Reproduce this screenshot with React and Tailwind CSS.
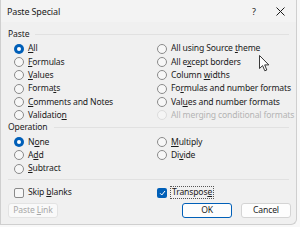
import React from 'react';

// underline one accelerator letter
const Label = ({ text, u }) => {
  const i = u === undefined ? -1 : u;
  if (i < 0) return <span>{text}</span>;
  return (
    <span className="whitespace-nowrap">
      {text.slice(0, i)}
      <span className="underline underline-offset-[1px]">{text[i]}</span>
      {text.slice(i + 1)}
    </span>
  );
};

const Radio = ({ text, u, checked, disabled }) => (
  <div className={`h-[13.3px] flex items-center gap-[4px] whitespace-nowrap ${disabled ? 'text-[#b4b4b4]' : 'text-[#1b1b1b]'}`}>
    {checked ? (
      <div className="w-[10px] h-[10px] shrink-0 rounded-full bg-[#005fb8] flex items-center justify-center">
        <div className="w-[4px] h-[4px] rounded-full bg-white" />
      </div>
    ) : (
      <div
        className={`w-[10px] h-[10px] shrink-0 rounded-full border ${
          disabled ? 'border-[#dcdcdc] bg-[#f5f5f5]' : 'border-[#8a8a8a] bg-[#f7f7f7]'
        }`}
      />
    )}
    <Label text={text} u={u} />
  </div>
);

const Section = ({ title }) => (
  <div className="h-[12px] flex items-center gap-[6px] text-[#1b1b1b]">
    <span>{title}</span>
    <div className="flex-1 h-px bg-[#e1e1e1]" />
  </div>
);

export default function App() {
  const leftPaste = [
    { text: 'All', u: 0, checked: true },
    { text: 'Formulas', u: 0 },
    { text: 'Values', u: 0 },
    { text: 'Formats', u: 5 },
    { text: 'Comments and Notes', u: 0 },
    { text: 'Validation', u: 9 },
  ];
  const rightPaste = [
    { text: 'All using Source theme', u: 17 },
    { text: 'All except borders', u: 5 },
    { text: 'Column widths', u: 7 },
    { text: 'Formulas and number formats', u: 2 },
    { text: 'Values and number formats', u: 3 },
    { text: 'All merging conditional formats', u: 7, disabled: true },
  ];

  return (
    <div
      className="w-[300px] h-[227px] bg-[#f8f8f8] overflow-hidden text-[8.6px] leading-none tracking-[-0.15px]"
      style={{ fontFamily: '"Noto Sans", "Open Sans", sans-serif' }}
    >
      <div className="relative w-[297px] h-[225px] border-l border-r border-b border-[#cfcfcf] rounded-br-[6px] bg-[#f0f0f0] flex flex-col">
        {/* title bar */}
        <div className="h-[22px] bg-[#f3f3f3] flex items-center pl-[6px] pr-[10px] text-[#1b1b1b]">
          <span className="flex-1 text-[9px]">Paste Special</span>
          <span className="w-[10px] text-center mr-[17px] text-[9px]">?</span>
          <svg width="9" height="9" viewBox="0 0 9 9" className="mr-[1px]">
            <path d="M0.5 0.5 L8.5 8.5 M8.5 0.5 L0.5 8.5" stroke="#1b1b1b" strokeWidth="1" />
          </svg>
        </div>

        <div className="flex-1 px-[7px] pt-[6px]">
          <Section title="Paste" />
          <div className="grid grid-cols-[143px_1fr] pl-[6px] pt-[2px]">
            <div>
              {leftPaste.map((r) => (
                <Radio key={r.text} {...r} />
              ))}
            </div>
            <div>
              {rightPaste.map((r) => (
                <Radio key={r.text} {...r} />
              ))}
            </div>
          </div>

          <Section title="Operation" />
          <div className="grid grid-cols-[143px_1fr] pl-[6px] pt-[1.5px]">
            <div>
              <Radio text="None" u={1} checked />
              <Radio text="Add" u={1} />
              <Radio text="Subtract" u={0} />
            </div>
            <div>
              <Radio text="Multiply" u={0} />
              <Radio text="Divide" u={2} />
            </div>
          </div>

          <div className="h-px bg-[#e1e1e1] mt-[3.5px] mb-[6.5px]" />

          <div className="grid grid-cols-[143px_1fr] pl-[6px]">
            <div className="h-[13px] flex items-center gap-[4px] text-[#1b1b1b]">
              <div className="w-[10px] h-[10px] rounded-[2px] border border-[#8a8a8a] bg-[#f7f7f7]" />
              <Label text="Skip blanks" u={5} />
            </div>
            <div className="h-[13px] flex items-center gap-[3px] text-[#1b1b1b]">
              <div className="w-[10px] h-[10px] rounded-[2px] bg-[#005fb8] flex items-center justify-center">
                <svg width="7" height="6" viewBox="0 0 7 6">
                  <path d="M1 3.2 L2.8 5 L6 1" stroke="white" strokeWidth="1" fill="none" />
                </svg>
              </div>
              <span className="border border-dotted border-[#555] px-[1px] py-[1px]">
                <Label text="Transpose" u={8} />
              </span>
            </div>
          </div>

          <div className="flex items-center mt-[4px]">
            <button className="w-[50px] h-[15px] rounded-[3px] border border-[#e3e3e3] bg-[#f9f9f9] text-[#a8a8a8] text-[8.6px]">
              Paste <Label text="Link" u={0} />
            </button>
            <div className="flex-1" />
            <button className="w-[50px] h-[15px] rounded-[3px] border border-[#005fb8] bg-[#fdfdfd] text-[#1b1b1b] text-[8.6px]">
              OK
            </button>
            <button className="w-[50px] h-[15px] ml-[9px] mr-[-2px] rounded-[3px] border border-[#d4d4d4] bg-[#fdfdfd] text-[#1b1b1b] text-[8.6px]">
              Cancel
            </button>
          </div>
        </div>

        {/* mouse pointer */}
        <svg width="12" height="18" viewBox="0 0 12 18" className="absolute left-[258px] top-[55px]">
          <path
            d="M0.5 0.5 L0.5 13.5 L3.6 10.6 L5.8 15.8 L7.8 15 L5.7 9.9 L9.8 9.9 Z"
            fill="white"
            stroke="#222"
            strokeWidth="0.9"
            strokeLinejoin="round"
          />
        </svg>
      </div>
    </div>
  );
}
